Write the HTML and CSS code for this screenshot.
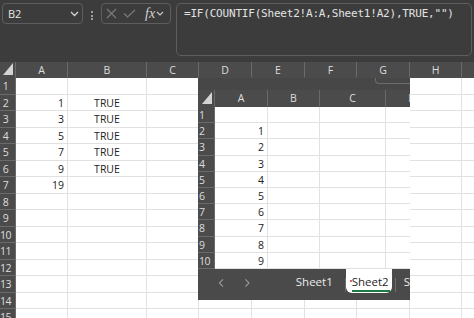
FILE: index.html
```html
<!DOCTYPE html>
<html lang="en">
<head>
    <meta charset="UTF-8">
    <meta name="viewport" content="width=device-width, initial-scale=1.0">
    <title>Book1 - Excel</title>
    <link rel="stylesheet" href="styles.css">
</head>
<body>
    <div class="app">
        <div class="formula-bar">
            <div class="name-box">
                <span>B2</span>
                <svg width="9" height="6" viewBox="0 0 9 6"><path d="M1 1l3.5 3.5L8 1" fill="none" stroke="#d4d4d4" stroke-width="1.3"/></svg>
            </div>
            <div class="grip"><span></span><span></span><span></span></div>
            <div class="fx-box">
                <svg class="fx-x" width="11" height="11" viewBox="0 0 11 11"><path d="M1 1l9 9M10 1l-9 9" stroke="#7a7a7a" stroke-width="1.2"/></svg>
                <svg class="fx-ok" width="13" height="9" viewBox="0 0 13 9"><path d="M1 4.5l3.5 3.5L12 1" fill="none" stroke="#7a7a7a" stroke-width="1.2"/></svg>
                <span class="fx-label">fx</span>
                <svg width="8" height="5" viewBox="0 0 8 5"><path d="M1 1l3 3 3-3" fill="none" stroke="#cfcfcf" stroke-width="1.1"/></svg>
            </div>
            <div class="formula">=IF(COUNTIF(Sheet2!A:A,Sheet1!A2),TRUE,"")</div>
        </div>

        <div class="sheet outer" id="outer-sheet">
            <!-- cells built below -->
        </div>

        <div class="window">
            <div class="window-top"><div class="window-edge"></div></div>
            <div class="sheet inner" id="inner-sheet"></div>
            <div class="tabs">
                <svg class="tab-arrow" width="7" height="10" viewBox="0 0 7 10"><path d="M5.5 1L1.5 5l4 4" fill="none" stroke="#9b9b9b" stroke-width="1.2"/></svg>
                <svg class="tab-arrow" width="7" height="10" viewBox="0 0 7 10"><path d="M1.5 1l4 4-4 4" fill="none" stroke="#9b9b9b" stroke-width="1.2"/></svg>
                <span class="tab">Sheet1</span>
                <span class="tab-sep"></span>
                <span class="tab active"><i class="dot"></i><b>Sheet2</b></span>
                <span class="tab-sep"></span>
                <span class="tab more">S</span>
            </div>
        </div>
    </div>

    <script>
        const outerCols = ['', 'A', 'B', 'C', 'D', 'E', 'F', 'G', 'H', 'I'];
        const innerCols = ['', 'A', 'B', 'C', 'D'];

        const outerValues = {
            A2: 1, B2: 'TRUE',
            A3: 3, B3: 'TRUE',
            A4: 5, B4: 'TRUE',
            A5: 7, B5: 'TRUE',
            A6: 9, B6: 'TRUE',
            A7: 19
        };

        const innerValues = {};
        for (let r = 2; r <= 10; r++) {
            innerValues['A' + r] = r - 1;
        }

        function buildSheet(el, cols, rowCount, values) {
            cols.forEach((col, i) => {
                const head = document.createElement('div');
                head.className = i === 0 ? 'cell corner' : 'cell col-head';
                head.textContent = col;
                el.appendChild(head);
            });

            for (let r = 1; r <= rowCount; r++) {
                cols.forEach((col, i) => {
                    const cell = document.createElement('div');
                    if (i === 0) {
                        cell.className = 'cell row-head';
                        cell.innerHTML = '<span>' + r + '</span>';
                    } else {
                        const value = values[col + r];
                        cell.className = 'cell';
                        if (typeof value === 'number') {
                            cell.classList.add('num');
                            cell.textContent = value;
                        } else if (value) {
                            cell.classList.add('bool');
                            cell.textContent = value;
                        }
                    }
                    el.appendChild(cell);
                });
            }
        }

        buildSheet(document.getElementById('outer-sheet'), outerCols, 15, outerValues);
        buildSheet(document.getElementById('inner-sheet'), innerCols, 10, innerValues);
    </script>
</body>
</html>
```

FILE: styles.css
```css
body {
    margin: 0;
    font-family: "Open Sans", "Noto Sans", sans-serif;
}
.app {
    position: relative;
    width: 474px;
    height: 318px;
    overflow: hidden;
    background-color: #fff;
}

/* formula bar */
.formula-bar {
    display: flex;
    align-items: flex-start;
    height: 62px;
    box-sizing: border-box;
    padding: 3px 2px 0 2px;
    background-color: #3c3c3c;
}
.name-box {
    display: flex;
    align-items: center;
    justify-content: space-between;
    width: 81px;
    height: 21px;
    box-sizing: border-box;
    padding: 0 3px 0 5px;
    border: 1px solid #5e5e5e;
    border-radius: 4px;
    color: #e6e6e6;
    font-size: 11px;
}
.grip {
    display: flex;
    flex-direction: column;
    align-items: center;
    gap: 1.5px;
    width: 18px;
    padding-top: 8px;
}
.grip span {
    width: 2px;
    height: 2px;
    border-radius: 1px;
    background-color: #bcbcbc;
}
.fx-box {
    display: flex;
    align-items: center;
    width: 70px;
    height: 21px;
    box-sizing: border-box;
    padding: 0 2px 0 4px;
    border: 1px solid #5e5e5e;
    border-radius: 4px;
}
.fx-ok {
    margin-left: 6px;
}
.fx-label {
    margin-left: 9px;
    margin-right: 1px;
    color: #d2d2d2;
    font: italic 14px/1 "Liberation Serif", serif;
}
.formula {
    flex: 1;
    height: 53px;
    margin-left: 5px;
    box-sizing: border-box;
    padding: 2px 7px;
    border: 1px solid #5e5e5e;
    border-radius: 5px;
    color: #e2e2e2;
    font: 11px/15px "DejaVu Sans Mono", monospace;
    letter-spacing: -0.2px;
}

/* grids */
.sheet {
    display: grid;
    font-size: 10.5px;
    color: #222;
}
.outer {
    grid-template-columns: 16px 52px 79px 52px 53px 53px 52px 53px 52px 52px;
    grid-template-rows: 16px;
    grid-auto-rows: 16.5px;
}
.inner {
    grid-template-columns: 17px 53px 52px 66px 53px;
    grid-template-rows: 17px;
    grid-auto-rows: 16.2px;
}
.cell {
    box-sizing: border-box;
    padding: 0 3px;
    border-right: 1px solid #e1e1e1;
    border-bottom: 1px solid #e1e1e1;
    background-color: #fff;
    line-height: 16px;
    white-space: nowrap;
}
.num {
    text-align: right;
}
.bool {
    text-align: center;
}
.col-head,
.corner,
.row-head {
    background-color: #4b4b4b;
    color: #dedede;
    border-color: #6a6a6a;
}
.col-head {
    text-align: center;
    border-bottom-color: #4b4b4b;
}
.corner {
    position: relative;
    border-bottom-color: #4b4b4b;
}
.corner::after {
    content: '';
    position: absolute;
    right: 2px;
    bottom: 2px;
    width: 10px;
    height: 12px;
    background-color: #d4d4d4;
    clip-path: polygon(100% 0, 100% 100%, 0 100%);
}
.row-head {
    font-size: 10.5px;
    letter-spacing: -0.4px;
}
.outer .row-head {
    display: flex;
    justify-content: center;
    padding: 0 4px 0 0;
}
.inner .row-head {
    padding: 0 0 0 1px;
}

/* floating Sheet2 window */
.window {
    position: absolute;
    left: 198px;
    top: 78px;
    width: 212px;
    overflow: hidden;
    background-color: #4b4b4b;
}
.window-top {
    display: flex;
    justify-content: flex-end;
    height: 12px;
    background-color: #474747;
}
.window-edge {
    width: 34px;
    height: 5px;
    border-left: 1px solid #6c6c6c;
    border-bottom: 1px solid #6c6c6c;
    border-bottom-left-radius: 4px;
}

/* sheet tabs */
.tabs {
    display: flex;
    align-items: flex-start;
    height: 31px;
    background-color: #4a4a4a;
    font-size: 11.5px;
}
.tab-arrow {
    margin-top: 9px;
    margin-left: 20px;
}
.tab-arrow + .tab-arrow {
    margin-left: 20px;
}
.tab {
    margin-top: 5px;
    color: #ececec;
    line-height: 16px;
}
.tab:first-of-type {
    margin-left: 45px;
}
.tab-sep {
    width: 1px;
    height: 14px;
    margin: 9px 0 0 12px;
    background-color: #6e6e6e;
}
.tab.active {
    position: relative;
    width: 50px;
    height: 24px;
    margin-top: 0;
    box-sizing: border-box;
    padding: 5px 0 0 6px;
    background-color: #fff;
    border-radius: 0 0 6px 6px;
    color: #262626;
}
.tab.active + .tab-sep {
    margin-left: 3px;
}
.tab.active b {
    font-weight: normal;
    display: inline-block;
    border-bottom: 2px solid #1d7a45;
    line-height: 14px;
    padding: 0 1px 1px 0;
}
.dot {
    position: absolute;
    left: 4px;
    top: 11px;
    width: 2px;
    height: 2px;
    border-radius: 1px;
    background-color: #d13438;
}
.tab.more {
    margin-left: 8px;
}
```
